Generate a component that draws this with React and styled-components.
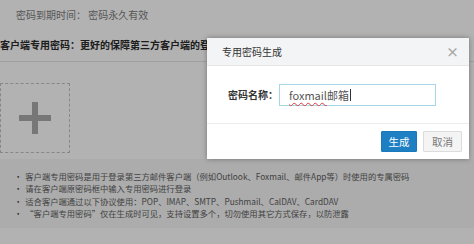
import React from "react";
import styled, { createGlobalStyle } from "styled-components";

const Global = createGlobalStyle`
  html, body {
    margin: 0;
    padding: 0;
    background: #ffffff;
  }
  body {
    font-family: "Noto Sans CJK SC", "Liberation Sans", sans-serif;
  }
`;

const Page = styled.div`
  position: relative;
  width: 474px;
  height: 244px;
  overflow: hidden;
  background: #ffffff;
`;

const ExpireRow = styled.div`
  height: 28px;
  padding-left: 16px;
  display: flex;
  align-items: center;
  font-size: 10px;
  color: #7c7c7c;
`;

const SectionTitle = styled.div`
  height: 33px;
  display: flex;
  align-items: center;
  font-size: 10px;
  font-weight: 700;
  color: #2a2a2a;
  white-space: nowrap;
  border-bottom: 1px solid #e6e6e6;
`;

const UploadArea = styled.div`
  padding: 21px 0 6px 0;
`;

const AddBox = styled.div`
  width: 68px;
  height: 68px;
  border: 1px dashed #c2c2c2;
  display: flex;
  align-items: center;
  justify-content: center;
`;

const Notes = styled.ul`
  margin: 0;
  height: 69px;
  padding: 11px 0 0 14px;
  box-sizing: border-box;
  list-style: none;
  background: #f6f6f6;
`;

const Note = styled.li`
  font-size: 8.3px;
  line-height: 12.3px;
  color: #606060;
  white-space: nowrap;
  &::before {
    content: "•";
    margin-right: 3px;
    color: #444;
  }
`;

const Overlay = styled.div`
  position: absolute;
  inset: 0;
  background: rgba(0, 0, 0, 0.3);
`;

const Dialog = styled.div`
  position: absolute;
  left: 207px;
  top: 38px;
  width: 262px;
  height: 121px;
  background: #ffffff;
  box-shadow: 0 0 5px rgba(0, 0, 0, 0.35);
  display: flex;
  flex-direction: column;
`;

const Header = styled.div`
  height: 27px;
  padding: 0 10px 0 15px;
  display: flex;
  align-items: center;
  justify-content: space-between;
  background: #f3f4f5;
  border-bottom: 1px solid #e6e6e6;
  font-size: 10px;
  color: #333;
`;

const Close = styled.span`
  font-size: 13px;
  font-weight: 700;
  color: #a8a8a8;
  line-height: 1;
`;

const Body = styled.div`
  flex: 1;
  display: flex;
  align-items: center;
  padding-left: 21px;
  gap: 0;
  border-bottom: 1px solid #ececec;
`;

const Label = styled.span`
  font-size: 10px;
  font-weight: 700;
  color: #333;
  white-space: nowrap;
`;

const Field = styled.div`
  width: 146px;
  height: 20px;
  margin-left: 1px;
  border: 1px solid #a6d7e7;
  display: flex;
  align-items: center;
  padding-left: 9px;
  box-sizing: content-box;
  font-size: 11px;
  color: #555;
`;

const Typed = styled.span`
  text-decoration: underline wavy #e0393e;
  text-decoration-thickness: 1px;
  text-underline-offset: 2px;
`;

const Caret = styled.span`
  display: inline-block;
  width: 1px;
  height: 12px;
  margin-left: 1px;
  background: #333;
`;

const Footer = styled.div`
  height: 35px;
  display: flex;
  align-items: center;
  justify-content: flex-end;
  gap: 6px;
  padding-right: 7px;
`;

const Button = styled.button`
  width: ${(p) => (p.$primary ? "36px" : "39px")};
  height: 21px;
  padding: 0;
  font-family: inherit;
  font-size: 10.5px;
  border: 1px solid ${(p) => (p.$primary ? "#1a78bd" : "#dcdcdc")};
  background: ${(p) => (p.$primary ? "#1f7fc3" : "#f4f4f4")};
  color: ${(p) => (p.$primary ? "#ffffff" : "#777")};
  border-radius: 1px;
`;

const notes = [
  "客户端专用密码是用于登录第三方邮件客户端（例如Outlook、Foxmail、邮件App等）时使用的专属密码",
  "请在客户端原密码框中输入专用密码进行登录",
  "适合客户端通过以下协议使用：POP、IMAP、SMTP、Pushmail、CalDAV、CardDAV",
  "“客户端专用密码”仅在生成时可见，支持设置多个，切勿使用其它方式保存，以防泄露",
];

export default function App() {
  return (
    <>
      <Global />
      <Page>
        <ExpireRow>密码到期时间：&nbsp;密码永久有效</ExpireRow>
        <SectionTitle>客户端专用密码：更好的保障第三方客户端的登录安全</SectionTitle>
        <UploadArea>
          <AddBox>
            <svg width="34" height="34" viewBox="0 0 34 34">
              <rect x="14" y="1" width="6" height="32" fill="#ababab" />
              <rect x="1" y="14" width="32" height="6" fill="#ababab" />
            </svg>
          </AddBox>
        </UploadArea>
        <Notes>
          {notes.map((n) => (
            <Note key={n}>{n}</Note>
          ))}
        </Notes>
        <Overlay />
        <Dialog>
          <Header>
            <span>专用密码生成</span>
            <Close>×</Close>
          </Header>
          <Body>
            <Label>密码名称：</Label>
            <Field>
              <Typed>foxmail</Typed>邮箱
              <Caret />
            </Field>
          </Body>
          <Footer>
            <Button $primary>生成</Button>
            <Button>取消</Button>
          </Footer>
        </Dialog>
      </Page>
    </>
  );
}
